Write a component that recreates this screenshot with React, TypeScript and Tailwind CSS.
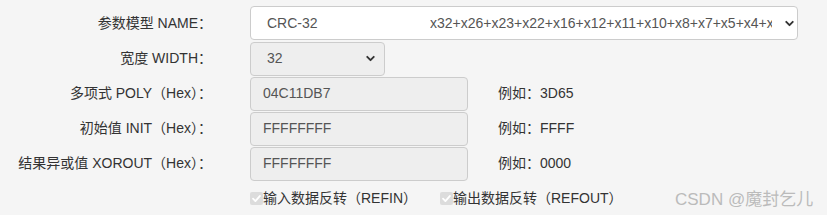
import { ChevronDown } from "lucide-react";

const font = {
	fontFamily: '"Liberation Sans", Arial, "Noto Sans CJK SC", sans-serif',
};

function Label({ children }: { children: React.ReactNode }) {
	return (
		<div className="w-[212px] shrink-0 text-right text-[14px] text-[#333] whitespace-nowrap">
			{children}
		</div>
	);
}

function HexRow({
	label,
	value,
	example,
}: {
	label: string;
	value: string;
	example: string;
}) {
	return (
		<div className="flex items-center h-[35px]">
			<Label>{label}</Label>
			<div className="ml-[38px] w-[218px] h-[34px] flex items-center pl-[12px] bg-[#eeeeee] border border-[#cccccc] rounded-[4px] text-[14px] text-[#555]">
				{value}
			</div>
			<div className="ml-[30px] text-[14px] text-[#333]">例如：{example}</div>
		</div>
	);
}

function Check({ label }: { label: string }) {
	return (
		<div className="flex items-center">
			<span className="w-[13px] h-[13px] rounded-[2px] bg-[#dcdcdc] flex items-center justify-center">
				<svg viewBox="0 0 12 12" className="w-[11px] h-[11px]">
					<path
						d="M2.2 6.2 L4.8 8.8 L9.8 3.2"
						fill="none"
						stroke="#ffffff"
						strokeWidth="2"
						strokeLinecap="round"
						strokeLinejoin="round"
					/>
				</svg>
			</span>
			<span className="text-[14px] text-[#333]">{label}</span>
		</div>
	);
}

export default function App() {
	return (
		<div
			className="relative w-[827px] h-[215px] bg-[#f5f5f5] pt-[6px] overflow-hidden"
			style={font}
		>
			{/* NAME */}
			<div className="flex items-center h-[35px]">
				<Label>参数模型 NAME：</Label>
				<div className="ml-[38px] w-[548px] h-[34px] flex items-center bg-white border border-[#cccccc] rounded-[4px] text-[14px] text-[#555] mb-[1px]">
					<span className="pl-[16px] w-[179px]">CRC-32</span>
					{/* long option text is clipped by the select, as in the original */}
					<span className="w-[342px] overflow-hidden whitespace-nowrap">
						x32+x26+x23+x22+x16+x12+x11+x10+x8+x7+x5+x4+x2+x+1
					</span>
					<ChevronDown
						size={13}
						strokeWidth={3.5}
						className="ml-[11px] text-[#333]"
					/>
				</div>
			</div>

			{/* WIDTH */}
			<div className="flex items-center h-[35px]">
				<Label>宽度 WIDTH：</Label>
				<div className="ml-[38px] w-[135px] h-[34px] flex items-center justify-between pl-[16px] pr-[7px] bg-[#eeeeee] border border-[#cccccc] rounded-[4px] text-[14px] text-[#555]">
					<span>32</span>
					<ChevronDown size={13} strokeWidth={3.5} className="text-[#333]" />
				</div>
			</div>

			<HexRow label="多项式 POLY（Hex）：" value="04C11DB7" example="3D65" />
			<HexRow label="初始值 INIT（Hex）：" value="FFFFFFFF" example="FFFF" />
			<HexRow label="结果异或值 XOROUT（Hex）：" value="FFFFFFFF" example="0000" />

			{/* reflect options */}
			<div className="flex items-center h-[30px] mt-[2px] pl-[250px]">
				<Check label="输入数据反转（REFIN）" />
				<div className="ml-[23px]">
					<Check label="输出数据反转（REFOUT）" />
				</div>
			</div>

			<div className="absolute left-[675px] top-[187px] text-[17px] text-[#bbbbbb] whitespace-nowrap">
				CSDN @魔封乞儿
			</div>
		</div>
	);
}
